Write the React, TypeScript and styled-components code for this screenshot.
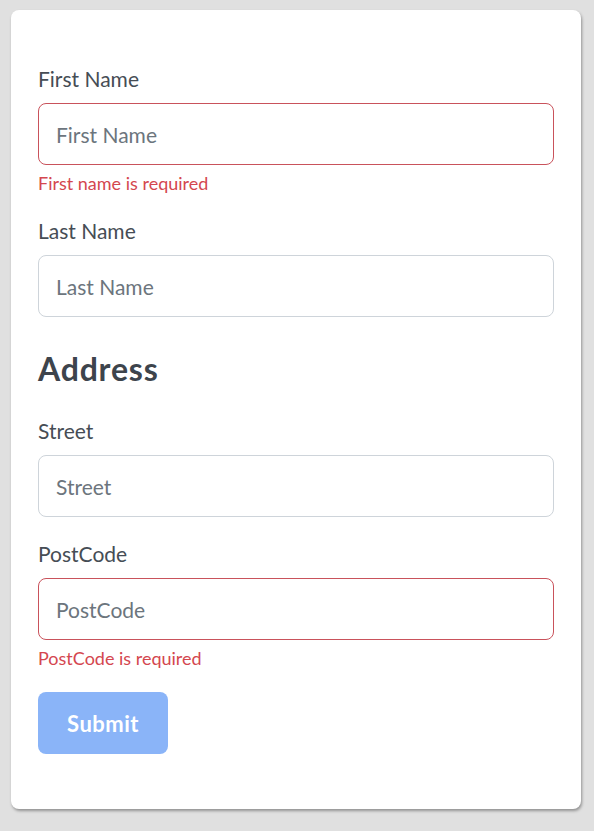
import * as React from "react";
import styled, { createGlobalStyle } from "styled-components";

const GlobalStyle = createGlobalStyle`
    html, body {
        margin: 0;
        padding: 0;
        background: #e0e0e0;
        font-family: Lato, "Noto Sans", "Liberation Sans", sans-serif;
    }
    * {
        box-sizing: border-box;
    }
`;

interface Field {
    name: string;
    label: string;
    error?: string;
}

const Page = styled.div`
    padding: 10px 13px 23px 11px;
`;

const Card = styled.div`
    width: 570px;
    background: #ffffff;
    border-radius: 8px;
    box-shadow: 1px 2px 3px rgba(0, 0, 0, 0.35);
    padding: 55px 27px;
`;

const Form = styled.form`
    display: flex;
    flex-direction: column;
    gap: 23px;
`;

const Group = styled.div`
    display: flex;
    flex-direction: column;
`;

const Label = styled.label`
    display: block;
    font-size: 21px;
    line-height: 28px;
    color: #464d55;
    margin-bottom: 10px;
`;

const Input = styled.input<{ $invalid?: boolean }>`
    width: 100%;
    height: 62px;
    padding: 0 17px;
    font-family: inherit;
    font-size: 21px;
    color: #434a52;
    background: #ffffff;
    border: 1px solid ${(p) => (p.$invalid ? "#c9525b" : "#ced4da")};
    border-radius: 8px;
    outline: none;

    &::placeholder {
        color: #6c757d;
    }
`;

const ErrorText = styled.div`
    margin-top: 7px;
    font-size: 18px;
    line-height: 22px;
    color: #d4474f;
`;

const Heading = styled.h2`
    margin: 11px 0 7px;
    font-size: 32px;
    line-height: 36px;
    font-weight: 700;
    letter-spacing: 0.8px;
    color: #3d444c;
`;

const SubmitBtn = styled.button`
    align-self: flex-start;
    width: 130px;
    height: 62px;
    border: none;
    border-radius: 8px;
    background: #8ab4f8;
    color: #ffffff;
    font-family: inherit;
    font-size: 22px;
    font-weight: 700;
    letter-spacing: 0.5px;
    cursor: pointer;
`;

const nameFields: Field[] = [
    { name: "firstName", label: "First Name", error: "First name is required" },
    { name: "lastName", label: "Last Name" },
];

const addressFields: Field[] = [
    { name: "street", label: "Street" },
    { name: "postCode", label: "PostCode", error: "PostCode is required" },
];

const FormField = ({ field }: { field: Field }) => (
    <Group>
        <Label htmlFor={field.name}>{field.label}</Label>
        <Input id={field.name} placeholder={field.label} $invalid={!!field.error} />
        {field.error && <ErrorText>{field.error}</ErrorText>}
    </Group>
);

export default function App() {
    return (
        <Page>
            <GlobalStyle />
            <Card>
                <Form onSubmit={(e) => e.preventDefault()}>
                    {nameFields.map((f) => (
                        <FormField key={f.name} field={f} />
                    ))}
                    <Heading>Address</Heading>
                    {addressFields.map((f) => (
                        <FormField key={f.name} field={f} />
                    ))}
                    <SubmitBtn type="submit">Submit</SubmitBtn>
                </Form>
            </Card>
        </Page>
    );
}
